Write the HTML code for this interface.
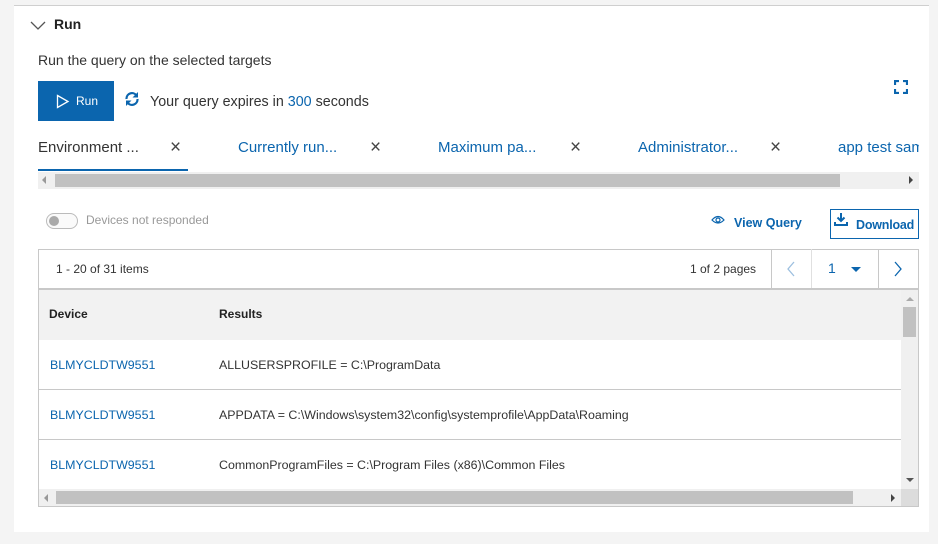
<!DOCTYPE html>
<html><head><style>
*{margin:0;padding:0;box-sizing:border-box}
body{width:938px;height:544px;background:#f4f4f4;font-family:"Liberation Sans",Arial,sans-serif;position:relative;overflow:hidden;color:#222}
.a{position:absolute;white-space:nowrap}
.card{position:absolute;left:14px;top:5px;width:915px;height:527px;background:#fff;border-top:1px solid #cfcfcf}
.blue{color:#0b65ae}
.x{font-size:19px;color:#444;line-height:1}
.r{font-size:12.4px;color:#333}
</style></head><body>
<div class="card"></div>
<svg class="a" style="left:30px;top:19px" width="16" height="12" viewBox="0 0 16 12"><path d="M1 3 L8 10 L15 3" fill="none" stroke="#555" stroke-width="1.3"/></svg>
<div class="a" style="left:54px;top:16px;font-size:14px;font-weight:bold">Run</div>
<div class="a" style="left:38px;top:52px;font-size:14px;color:#333">Run the query on the selected targets</div>
<div class="a" style="left:38px;top:81px;width:76px;height:40px;background:#0b65ae"></div>
<svg class="a" style="left:56px;top:94px" width="14" height="15" viewBox="0 0 14 15"><path d="M1.5 1.5 L12 7.5 L1.5 13.5 Z" fill="none" stroke="#fff" stroke-width="1.3"/></svg>
<div class="a" style="left:76px;top:94px;font-size:12px;color:#fff">Run</div>
<svg class="a" style="left:124px;top:91px" width="16" height="16" viewBox="0 0 16 16"><path d="M2.5 8 A5.5 5.5 0 0 1 12.5 4.5" fill="none" stroke="#0b65ae" stroke-width="2.2"/><path d="M14 1 V6.5 H8.5" fill="#0b65ae"/><path d="M13.5 8 A5.5 5.5 0 0 1 3.5 11.5" fill="none" stroke="#0b65ae" stroke-width="2.2"/><path d="M2 15 V9.5 H7.5" fill="#0b65ae"/></svg>
<div class="a" style="left:150px;top:94px;font-size:14.3px;color:#333">Your query expires in <span class="blue">300</span> seconds</div>
<svg class="a" style="left:894px;top:80px" width="14" height="14" viewBox="0 0 14 14"><path d="M1 5V1H5M9 1H13V5M13 9V13H9M5 13H1V9" fill="none" stroke="#0b65ae" stroke-width="2.2"/></svg>
<div class="a" style="left:38px;top:139px;font-size:15px;color:#333">Environment ...</div>
<div class="a x" style="left:170px;top:138px">×</div>
<div class="a" style="left:38px;top:169px;width:150px;height:2px;background:#0b65ae"></div>
<div class="a blue" style="left:238px;top:139px;font-size:15px">Currently run...</div>
<div class="a x" style="left:370px;top:138px">×</div>
<div class="a blue" style="left:438px;top:139px;font-size:15px">Maximum pa...</div>
<div class="a x" style="left:570px;top:138px">×</div>
<div class="a blue" style="left:638px;top:139px;font-size:15px">Administrator...</div>
<div class="a x" style="left:770px;top:138px">×</div>
<div class="a blue" style="left:838px;top:139px;font-size:15px;width:81px;overflow:hidden">app test sample</div>
<div class="a" style="left:38px;top:172px;width:881px;height:17px;background:#f0f0f0"></div>
<div class="a" style="left:55px;top:174px;width:785px;height:13px;background:#c1c1c1"></div>
<div class="a" style="left:42px;top:176px;width:0;height:0;border:4px solid transparent;border-right:4px solid #999;border-left:0"></div>
<div class="a" style="left:909px;top:176px;width:0;height:0;border:4px solid transparent;border-left:4px solid #444;border-right:0"></div>
<div class="a" style="left:46px;top:213px;width:32px;height:16px;border:1px solid #bbb;border-radius:8px;background:#fafafa"></div>
<div class="a" style="left:49px;top:216px;width:10px;height:10px;border-radius:50%;background:#aaa"></div>
<div class="a" style="left:86px;top:213px;font-size:12px;color:#999">Devices not responded</div>
<svg class="a" style="left:711px;top:214px" width="14" height="12" viewBox="0 0 14 12"><path d="M1 6 Q7 -1 13 6 Q7 12 1 6Z" fill="none" stroke="#0b65ae" stroke-width="1.2"/><circle cx="7" cy="6" r="2" fill="none" stroke="#0b65ae" stroke-width="1.2"/></svg>
<div class="a blue" style="left:734px;top:216px;font-size:12.5px;font-weight:bold">View Query</div>
<div class="a" style="left:830px;top:209px;width:89px;height:30px;border:1px solid #0b65ae"></div>
<svg class="a" style="left:834px;top:212px" width="14" height="15" viewBox="0 0 14 15"><path d="M7 1V9M3.5 5.5L7 9L10.5 5.5M1 10V13H13V10" fill="none" stroke="#0b65ae" stroke-width="2"/></svg>
<div class="a blue" style="left:856px;top:218px;font-size:12.5px;font-weight:bold;letter-spacing:-0.2px">Download</div>
<div class="a" style="left:38px;top:249px;width:881px;height:258px;border:1px solid #c8c8c8;background:#fff"></div>
<div class="a" style="left:56px;top:262px;font-size:12px;color:#333">1 - 20 of 31 items</div>
<div class="a" style="left:690px;top:262px;font-size:12px;color:#333">1 of 2 pages</div>
<div class="a" style="left:771px;top:249px;width:1px;height:40px;background:#c8c8c8"></div>
<div class="a" style="left:811px;top:249px;width:1px;height:40px;background:#e0e0e0"></div>
<div class="a" style="left:878px;top:249px;width:1px;height:40px;background:#c8c8c8"></div>
<svg class="a" style="left:786px;top:261px" width="10" height="16" viewBox="0 0 10 16"><path d="M8 1L2 8L8 15" fill="none" stroke="#9cbfdf" stroke-width="1.3"/></svg>
<div class="a blue" style="left:828px;top:260px;font-size:14px">1</div>
<div class="a" style="left:851px;top:267px;width:0;height:0;border:5px solid transparent;border-top:5px solid #0b65ae;border-bottom:0"></div>
<svg class="a" style="left:893px;top:261px" width="10" height="16" viewBox="0 0 10 16"><path d="M2 1L8 8L2 15" fill="none" stroke="#0b65ae" stroke-width="1.3"/></svg>
<div class="a" style="left:39px;top:288px;width:879px;height:2px;background:#c8c8c8"></div>
<div class="a" style="left:39px;top:290px;width:862px;height:50px;background:#f2f2f2"></div>
<div class="a" style="left:49px;top:307px;font-size:12px;font-weight:bold">Device</div>
<div class="a" style="left:219px;top:307px;font-size:12px;font-weight:bold">Results</div>
<div class="a" style="left:39px;top:389px;width:862px;height:1px;background:#c8c8c8"></div>
<div class="a" style="left:39px;top:439px;width:862px;height:1px;background:#c8c8c8"></div>
<div class="a blue r" style="left:50px;top:358px;color:#0b65ae">BLMYCLDTW9551</div>
<div class="a r" style="left:219px;top:358px">ALLUSERSPROFILE = C:\ProgramData</div>
<div class="a blue r" style="left:50px;top:408px;color:#0b65ae">BLMYCLDTW9551</div>
<div class="a r" style="left:219px;top:408px">APPDATA = C:\Windows\system32\config\systemprofile\AppData\Roaming</div>
<div class="a blue r" style="left:50px;top:458px;color:#0b65ae">BLMYCLDTW9551</div>
<div class="a r" style="left:219px;top:458px">CommonProgramFiles = C:\Program Files (x86)\Common Files</div>
<div class="a" style="left:901px;top:290px;width:17px;height:216px;background:#f0f0f0"></div>
<div class="a" style="left:903px;top:307px;width:13px;height:30px;background:#c1c1c1"></div>
<div class="a" style="left:906px;top:297px;border:4px solid transparent;border-bottom:4px solid #aaa;border-top:0"></div>
<div class="a" style="left:906px;top:478px;border:4px solid transparent;border-top:4px solid #555;border-bottom:0"></div>
<div class="a" style="left:39px;top:489px;width:862px;height:17px;background:#f0f0f0"></div>
<div class="a" style="left:56px;top:491px;width:797px;height:13px;background:#c1c1c1"></div>
<div class="a" style="left:44px;top:494px;border:4px solid transparent;border-right:4px solid #999;border-left:0"></div>
<div class="a" style="left:891px;top:494px;border:4px solid transparent;border-left:4px solid #444;border-right:0"></div>
<div class="a" style="left:901px;top:489px;width:17px;height:17px;background:#dcdcdc"></div>
</body></html>
